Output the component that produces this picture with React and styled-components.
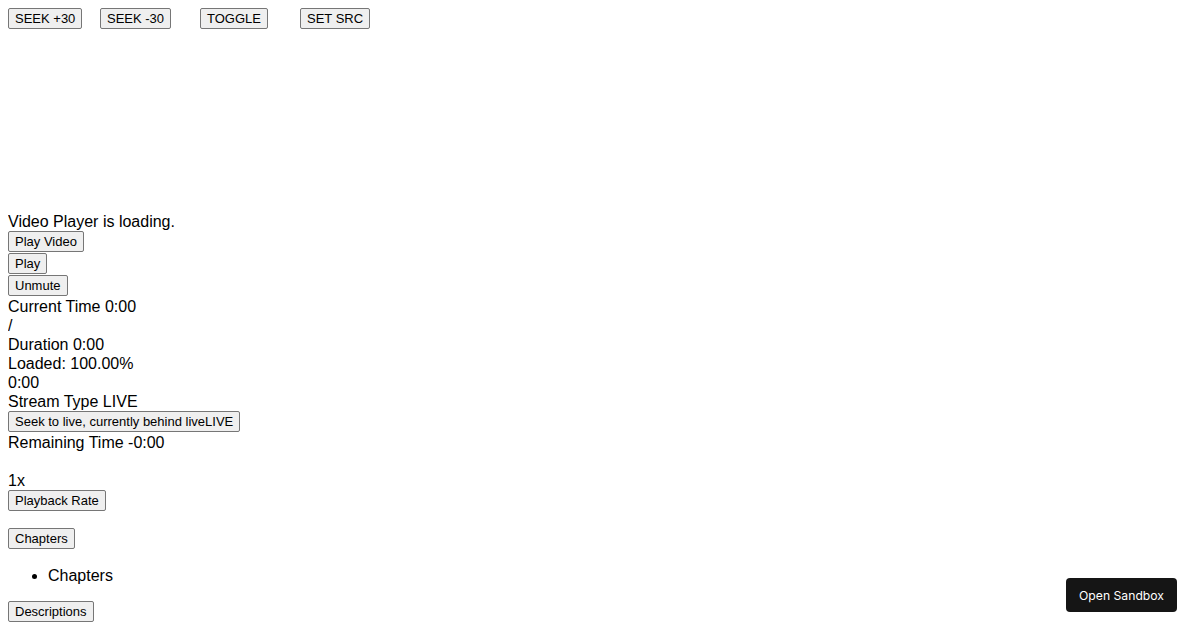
import React from "react";
import styled, { createGlobalStyle } from "styled-components";

const Global = createGlobalStyle`
  html, body { margin: 0; padding: 0; background: #fff; }
  body {
    margin: 8px;
    font-family: "Liberation Sans", Arial, sans-serif;
    font-size: 16px;
    line-height: 19px;
    color: #000;
  }
`;

const Toolbar = styled.div`
  display: grid;
  grid-template-columns: 92px 100px 100px auto;
  justify-items: start;
  height: 22px;
`;

const Btn = styled.button`
  font-family: "Liberation Sans", Arial, sans-serif;
  font-size: 13px;
  line-height: 15px;
  height: 21px;
  padding: 1px 6px;
  margin: 0;
  background: #efefef;
  color: #000;
  border: 1px solid #767676;
  border-radius: 2px;
  box-sizing: border-box;
  white-space: nowrap;
`;

const Stage = styled.div`
  height: 182px;
`;

const Line = styled.div`
  height: 19px;
  line-height: 19px;
  white-space: pre;
`;

const BtnRow = styled.div`
  height: 22px;
  display: flex;
  align-items: flex-start;
`;

const EmptyMenu = styled.div`
  height: 16px;
`;

const List = styled.ul`
  margin: 16px 0;
  padding-left: 40px;
  line-height: 19px;
`;

const Sandbox = styled.button`
  position: fixed;
  right: 23px;
  bottom: 18px;
  width: 111px;
  height: 34px;
  background: #151515;
  color: #fff;
  border: none;
  border-radius: 4px;
  font-family: Inter, "Noto Sans", sans-serif;
  font-size: 12.2px;
  padding: 0;
`;

export default function App() {
  return (
    <>
      <Global />
      <Toolbar>
        <Btn>SEEK +30</Btn>
        <Btn>SEEK -30</Btn>
        <Btn>TOGGLE</Btn>
        <Btn>SET SRC</Btn>
      </Toolbar>
      <Stage />
      <Line>Video Player is loading.</Line>
      <BtnRow><Btn>Play Video</Btn></BtnRow>
      <BtnRow><Btn>Play</Btn></BtnRow>
      <BtnRow><Btn>Unmute</Btn></BtnRow>
      <Line>Current Time 0:00</Line>
      <Line>/</Line>
      <Line>Duration 0:00</Line>
      <Line>Loaded: 100.00%</Line>
      <Line>0:00</Line>
      <Line>Stream Type LIVE</Line>
      <BtnRow><Btn>Seek to live, currently behind liveLIVE</Btn></BtnRow>
      <Line>Remaining Time -0:00</Line>
      <Line> </Line>
      <Line>1x</Line>
      <BtnRow><Btn>Playback Rate</Btn></BtnRow>
      <EmptyMenu />
      <BtnRow><Btn>Chapters</Btn></BtnRow>
      <List><li>Chapters</li></List>
      <BtnRow><Btn>Descriptions</Btn></BtnRow>
      <Sandbox>Open Sandbox</Sandbox>
    </>
  );
}
